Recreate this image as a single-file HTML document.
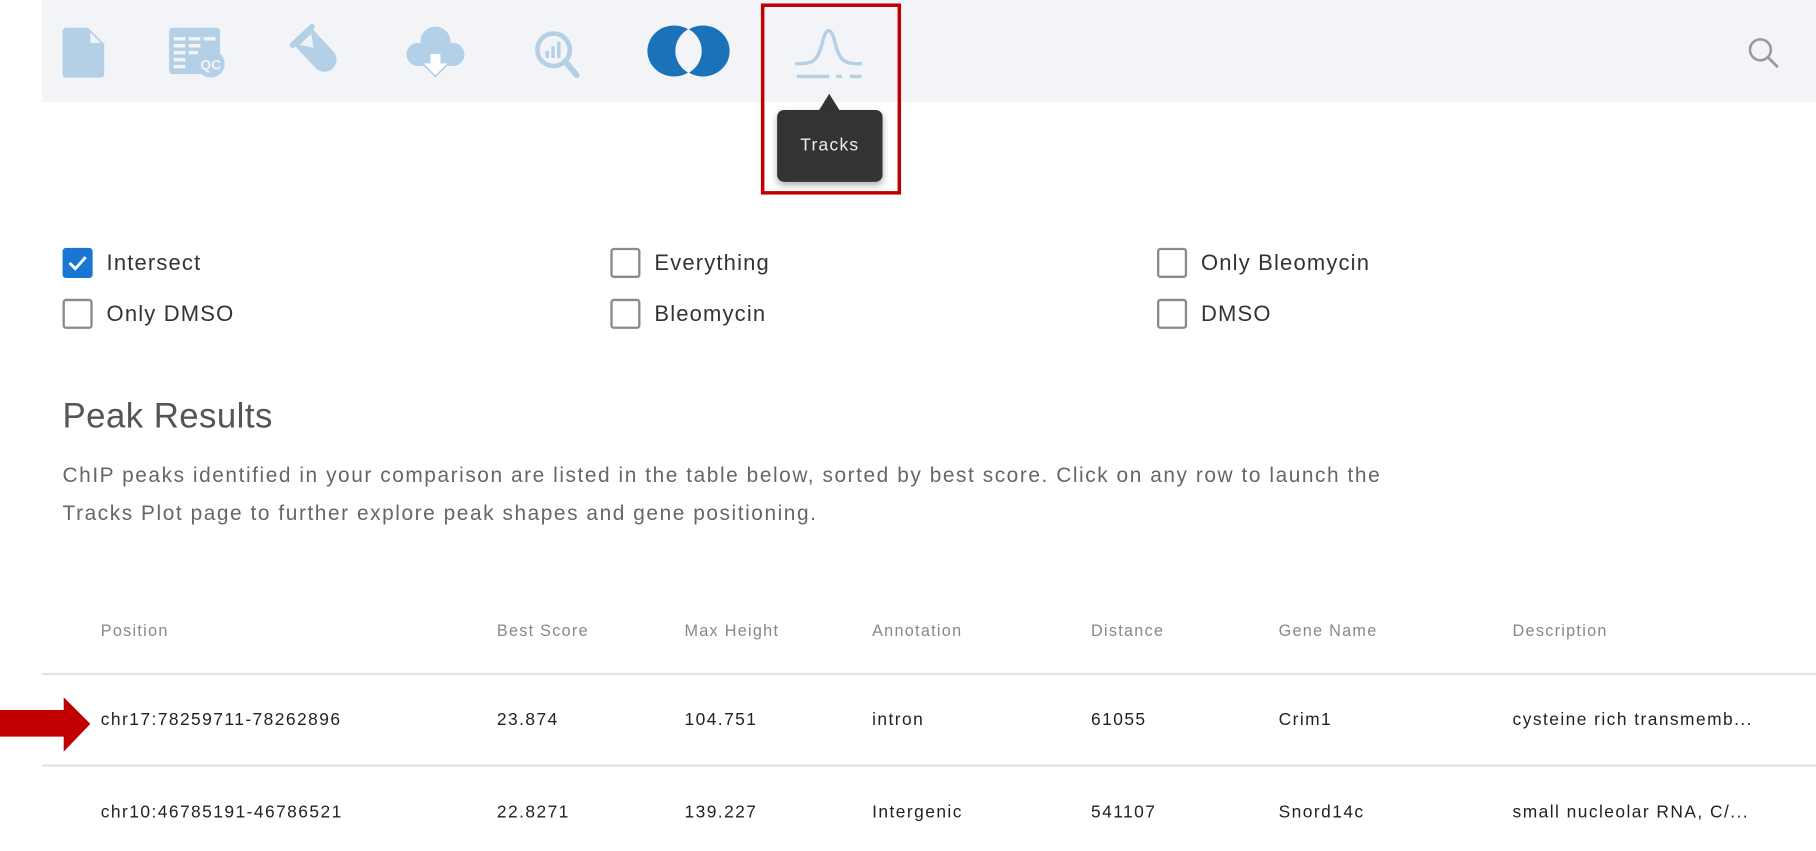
<!DOCTYPE html>
<html><head><meta charset="utf-8"><style>
html,body{margin:0;padding:0;width:1816px;height:851px;overflow:hidden;background:#fff;font-family:"Liberation Sans",Arial,sans-serif}
#w{position:absolute;left:0;top:0;width:1568px;height:735px;transform:scale(1.15816);transform-origin:0 0}
.a{position:absolute}
.hdr{left:36px;top:0;width:1532px;height:88px;background:#f3f4f8}
.cb{position:absolute;width:22px;height:22px;border:2px solid #8a8a8a;border-radius:3px;box-sizing:content-box}
.lbl{position:absolute;font-size:19px;color:#333;line-height:24px;letter-spacing:1px;top:216px}
.th{position:absolute;top:536px;font-size:14px;color:#888;letter-spacing:1.1px}
.td{position:absolute;font-size:15px;color:#222;letter-spacing:1.25px}
</style></head><body><div id="w">
<div class="a hdr"></div>
<svg class="a" style="left:0;top:0" width="1568" height="90">
<g fill="#b3d0e7">
<path d="M57 24 h19 l14 14 v26 a3 3 0 0 1 -3 3 h-30 a3 3 0 0 1 -3 -3 v-37 a3 3 0 0 1 3 -3z"/>
<rect x="146" y="24" width="44" height="40" rx="3"/>
<circle cx="182" cy="55" r="12"/>
</g>
<path d="M78 28 v9 h9z" fill="#f3f4f8"/>
<g fill="#f3f4f8"><rect x="150" y="32" width="10" height="3"/><rect x="150" y="38" width="10" height="3"/><rect x="150" y="44" width="10" height="3"/><rect x="150" y="50" width="10" height="3"/><rect x="150" y="56" width="10" height="3"/><rect x="163" y="32" width="10" height="3"/><rect x="163" y="38" width="10" height="3"/><rect x="163" y="44" width="8" height="3"/><rect x="176" y="32" width="10" height="3"/></g>
<text x="182" y="60" font-size="12" fill="#f3f4f8" text-anchor="middle" font-family="Liberation Sans" font-weight="bold">QC</text>
<g transform="translate(261 31) rotate(-43)">
<rect x="-14" y="-2.5" width="28" height="5" rx="2.5" fill="#b3d0e7"/>
<path d="M-10.5 0 h21 v28 a10.5 10.5 0 0 1 -21 0z" fill="#b3d0e7"/>
<path d="M-7 4 h14 l-7 10z" fill="#eef3f8"/>
</g>
<circle cx="376" cy="36" r="13" fill="#b3d0e7"/>
<circle cx="361" cy="47" r="10" fill="#b3d0e7"/>
<circle cx="391" cy="47" r="10" fill="#b3d0e7"/>
<rect x="361" y="40" width="30" height="17" fill="#b3d0e7"/>
<path d="M371 46 h10 v8 h7 l-12 12 l-12 -12 h7z" fill="#fff" stroke="#b3d0e7" stroke-width="1.5"/>
<circle cx="478" cy="43" r="14" fill="none" stroke="#b3d0e7" stroke-width="4"/>
<path d="M488 53 l10 12" stroke="#b3d0e7" stroke-width="5" stroke-linecap="round"/>
<g fill="#b3d0e7"><rect x="471" y="44" width="3" height="6"/><rect x="476" y="40" width="3" height="10"/><rect x="481" y="36" width="3" height="14"/></g>
<ellipse cx="582" cy="44" rx="23" ry="22" fill="#1a73b8"/><ellipse cx="607" cy="44" rx="23" ry="22" fill="#1a73b8"/>
<path d="M594.5 25 a23 22 0 0 1 0 38 a23 22 0 0 1 0 -38z" fill="#f3f4f8"/>
<path d="M688 55 c14 0 18 -2 22 -18 c3 -14 8 -14 11 0 c4 16 8 18 22 18" fill="none" stroke="#b3d0e7" stroke-width="3" stroke-linecap="round"/>
<path d="M688 66 h28 M722 66 h5 M734 66 h10" stroke="#b3d0e7" stroke-width="3"/>
<circle cx="1520" cy="43" r="9" fill="none" stroke="#999" stroke-width="2.2"/><path d="M1527 50 l8 8" stroke="#999" stroke-width="2.4"/>
</svg>
<div class="a" style="left:657px;top:3px;width:115px;height:159px;border:3px solid #c00000"></div>
<svg class="a" style="left:706px;top:81px" width="20" height="16"><path d="M10 0 L20 16 H0z" fill="#333"/></svg>
<div class="a" style="left:671px;top:95px;width:91px;height:62px;background:#333;border-radius:6px;box-shadow:0 3px 6px rgba(0,0,0,.3);color:#eee;font-size:15px;letter-spacing:1.1px;text-align:center;line-height:62px">Tracks</div>
<div class="cb" style="left:54px;top:214px;background:#1976d2;border-color:#1976d2"><svg width="22" height="22"><path d="M4 11 l5 5 l9 -10" fill="none" stroke="#fff" stroke-width="2.5"/></svg></div>
<div class="lbl" style="left:92px">Intersect</div>
<div class="cb" style="left:527px;top:214px"></div><div class="lbl" style="left:565px">Everything</div>
<div class="cb" style="left:999px;top:214px"></div><div class="lbl" style="left:1037px">Only Bleomycin</div>
<div class="cb" style="left:54px;top:258px"></div><div class="lbl" style="left:92px;top:260px">Only DMSO</div>
<div class="cb" style="left:527px;top:258px"></div><div class="lbl" style="left:565px;top:260px">Bleomycin</div>
<div class="cb" style="left:999px;top:258px"></div><div class="lbl" style="left:1037px;top:260px">DMSO</div>
<div class="a" style="left:54px;top:343px;font-size:30px;color:#555;letter-spacing:0.4px">Peak Results</div>
<div class="a" style="left:54px;top:394px;font-size:18px;color:#666;line-height:33px;letter-spacing:1.35px;width:1300px">ChIP peaks identified in your comparison are listed in the table below, sorted by best score. Click on any row to launch the<br>Tracks Plot page to further explore peak shapes and gene positioning.</div>
<div class="th" style="left:87px">Position</div><div class="th" style="left:429px">Best Score</div><div class="th" style="left:591px">Max Height</div><div class="th" style="left:753px">Annotation</div><div class="th" style="left:942px">Distance</div><div class="th" style="left:1104px">Gene Name</div><div class="th" style="left:1306px">Description</div>
<div class="a" style="left:36px;top:581px;width:1532px;height:2px;background:#e3e3e3"></div>
<div class="a" style="left:36px;top:660px;width:1532px;height:2px;background:#e3e3e3"></div>
<div class="td" style="left:87px;top:613px">chr17:78259711-78262896</div><div class="td" style="left:429px;top:613px">23.874</div><div class="td" style="left:591px;top:613px">104.751</div><div class="td" style="left:753px;top:613px">intron</div><div class="td" style="left:942px;top:613px">61055</div><div class="td" style="left:1104px;top:613px">Crim1</div><div class="td" style="left:1306px;top:613px">cysteine rich transmemb...</div>
<div class="td" style="left:87px;top:693px">chr10:46785191-46786521</div><div class="td" style="left:429px;top:693px">22.8271</div><div class="td" style="left:591px;top:693px">139.227</div><div class="td" style="left:753px;top:693px">Intergenic</div><div class="td" style="left:942px;top:693px">541107</div><div class="td" style="left:1104px;top:693px">Snord14c</div><div class="td" style="left:1306px;top:693px">small nucleolar RNA, C/...</div>
<svg class="a" style="left:0;top:600px" width="80" height="52"><path d="M0 13 H55 V2 L78 25 L55 49 V36 H0z" fill="#c00000"/></svg>
</div></body></html>
